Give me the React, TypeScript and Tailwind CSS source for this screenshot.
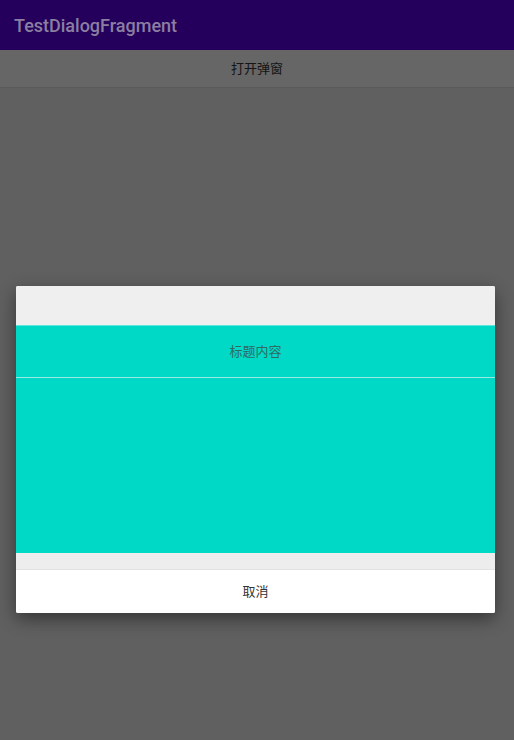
export default function App() {
  return (
    <div className="relative h-[740px] w-[514px] overflow-hidden bg-[#606060] font-['Roboto','Noto_Sans_CJK_SC',sans-serif]">
      <header className="flex h-[50px] items-center bg-[#24005c] px-[14px]">
        <h1 className="text-[18px] font-medium text-[#8a7fa0]">TestDialogFragment</h1>
      </header>
      <div className="flex h-[38px] items-center justify-center border-b border-[#5a5a5a] bg-[#666666]">
        <span className="text-[13px] text-[#151515]">打开弹窗</span>
      </div>

      <div className="absolute left-[16px] top-[286px] w-[479px] overflow-hidden rounded-[2px] bg-white shadow-[0_6px_18px_rgba(0,0,0,0.45)]">
        <div className="h-[39px] bg-[#efefef]" />
        <div className="flex h-[52px] items-center justify-center border-t border-[#5fe5da] bg-[#00d9c6]">
          <span className="text-[13px] text-[#2d6b63]">标题内容</span>
        </div>
        <div className="h-[176px] border-t border-[#9aeae2] bg-[#00d9c6]" />
        <div className="h-[17px] border-b border-[#e2e2e2] bg-[#ededed]" />
        <div className="flex h-[43px] items-center justify-center bg-white">
          <span className="text-[13px] text-[#333333]">取消</span>
        </div>
      </div>
    </div>
  );
}
